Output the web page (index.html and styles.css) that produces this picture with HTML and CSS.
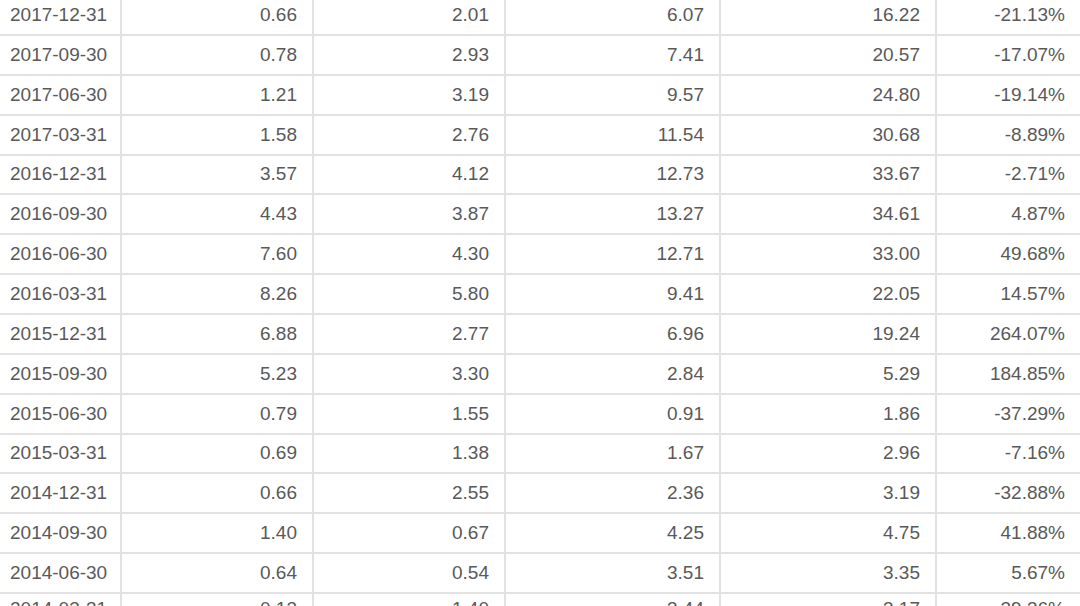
FILE: index.html
```html
<!DOCTYPE html>
<html>
<head>
<meta charset="utf-8">
<link rel="stylesheet" href="styles.css">
</head>
<body>
<div class="frame">
<table class="data">
<colgroup>
<col class="c1"><col class="c2"><col class="c3"><col class="c4"><col class="c5"><col class="c6">
</colgroup>
<tbody>
<tr><td>2017-12-31</td><td>0.66</td><td>2.01</td><td>6.07</td><td>16.22</td><td>-21.13%</td></tr>
<tr><td>2017-09-30</td><td>0.78</td><td>2.93</td><td>7.41</td><td>20.57</td><td>-17.07%</td></tr>
<tr><td>2017-06-30</td><td>1.21</td><td>3.19</td><td>9.57</td><td>24.80</td><td>-19.14%</td></tr>
<tr><td>2017-03-31</td><td>1.58</td><td>2.76</td><td>11.54</td><td>30.68</td><td>-8.89%</td></tr>
<tr><td>2016-12-31</td><td>3.57</td><td>4.12</td><td>12.73</td><td>33.67</td><td>-2.71%</td></tr>
<tr><td>2016-09-30</td><td>4.43</td><td>3.87</td><td>13.27</td><td>34.61</td><td>4.87%</td></tr>
<tr><td>2016-06-30</td><td>7.60</td><td>4.30</td><td>12.71</td><td>33.00</td><td>49.68%</td></tr>
<tr><td>2016-03-31</td><td>8.26</td><td>5.80</td><td>9.41</td><td>22.05</td><td>14.57%</td></tr>
<tr><td>2015-12-31</td><td>6.88</td><td>2.77</td><td>6.96</td><td>19.24</td><td>264.07%</td></tr>
<tr><td>2015-09-30</td><td>5.23</td><td>3.30</td><td>2.84</td><td>5.29</td><td>184.85%</td></tr>
<tr><td>2015-06-30</td><td>0.79</td><td>1.55</td><td>0.91</td><td>1.86</td><td>-37.29%</td></tr>
<tr><td>2015-03-31</td><td>0.69</td><td>1.38</td><td>1.67</td><td>2.96</td><td>-7.16%</td></tr>
<tr><td>2014-12-31</td><td>0.66</td><td>2.55</td><td>2.36</td><td>3.19</td><td>-32.88%</td></tr>
<tr><td>2014-09-30</td><td>1.40</td><td>0.67</td><td>4.25</td><td>4.75</td><td>41.88%</td></tr>
<tr><td>2014-06-30</td><td>0.64</td><td>0.54</td><td>3.51</td><td>3.35</td><td>5.67%</td></tr>
<tr class="cut"><td>2014-03-31</td><td>0.13</td><td>1.40</td><td>3.44</td><td>3.17</td><td>-39.36%</td></tr>
</tbody>
</table>
</div>
</body>
</html>
```
FILE: styles.css
```css
html, body {
  margin: 0;
  padding: 0;
  background: #ffffff;
}
.frame {
  width: 1080px;
  height: 606px;
  overflow: hidden;
}
.data {
  margin-top: -5.9px;
  width: 1080px;
  border-collapse: collapse;
  table-layout: fixed;
  font-family: "Liberation Sans", Arial, sans-serif;
  font-size: 19px;
  color: #595959;
}
.c1 { width: 121px; }
.c2 { width: 192px; }
.c3 { width: 192px; }
.c4 { width: 215px; }
.c5 { width: 216px; }
.c6 { width: 144px; }
.data td {
  height: 39.86px;
  padding: 0 15px 0 10px;
  border: 2px solid #e2e2e2;
  text-align: right;
  white-space: nowrap;
  box-sizing: border-box;
}
.data .cut td {
  height: 32px;
}
.data td:first-child {
  text-align: left;
  border-left: none;
}
.data td:last-child {
  border-right: none;
}
```
